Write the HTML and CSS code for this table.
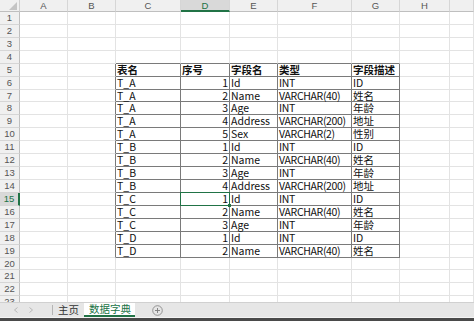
FILE: index.html
```html
<!DOCTYPE html>
<html lang="zh">
<head>
<meta charset="utf-8">
<link rel="stylesheet" href="styles.css">
</head>
<body>
<div class="app">
  <div class="sheet">
    <div class="corner"><span class="tri"></span></div>
    <div class="h">A</div><div class="h">B</div><div class="h">C</div><div class="h sel">D</div><div class="h">E</div><div class="h">F</div><div class="h">G</div><div class="h">H</div><div class="h"></div>

    <div class="r">1</div><div class="c"></div><div class="c"></div><div class="c"></div><div class="c"></div><div class="c"></div><div class="c"></div><div class="c"></div><div class="c"></div><div class="c"></div>
    <div class="r">2</div><div class="c"></div><div class="c"></div><div class="c"></div><div class="c"></div><div class="c"></div><div class="c"></div><div class="c"></div><div class="c"></div><div class="c"></div>
    <div class="r">3</div><div class="c"></div><div class="c"></div><div class="c"></div><div class="c"></div><div class="c"></div><div class="c"></div><div class="c"></div><div class="c"></div><div class="c"></div>
    <div class="r">4</div><div class="c"></div><div class="c"></div><div class="c tt"></div><div class="c tt"></div><div class="c tt"></div><div class="c tt"></div><div class="c tt"></div><div class="c"></div><div class="c"></div>

    <div class="r">5</div><div class="c"></div><div class="c tl"></div><div class="c t b">表名</div><div class="c t b">序号</div><div class="c t b">字段名</div><div class="c t b">类型</div><div class="c t b">字段描述</div><div class="c"></div><div class="c"></div>
    <div class="r">6</div><div class="c"></div><div class="c tl"></div><div class="c t">T_A</div><div class="c t n">1</div><div class="c t">Id</div><div class="c t f">INT</div><div class="c t">ID</div><div class="c"></div><div class="c"></div>
    <div class="r">7</div><div class="c"></div><div class="c tl"></div><div class="c t">T_A</div><div class="c t n">2</div><div class="c t">Name</div><div class="c t f">VARCHAR(40)</div><div class="c t">姓名</div><div class="c"></div><div class="c"></div>
    <div class="r">8</div><div class="c"></div><div class="c tl"></div><div class="c t">T_A</div><div class="c t n">3</div><div class="c t">Age</div><div class="c t f">INT</div><div class="c t">年龄</div><div class="c"></div><div class="c"></div>
    <div class="r">9</div><div class="c"></div><div class="c tl"></div><div class="c t">T_A</div><div class="c t n">4</div><div class="c t">Address</div><div class="c t f">VARCHAR(200)</div><div class="c t">地址</div><div class="c"></div><div class="c"></div>
    <div class="r">10</div><div class="c"></div><div class="c tl"></div><div class="c t">T_A</div><div class="c t n">5</div><div class="c t">Sex</div><div class="c t f">VARCHAR(2)</div><div class="c t">性别</div><div class="c"></div><div class="c"></div>
    <div class="r">11</div><div class="c"></div><div class="c tl"></div><div class="c t">T_B</div><div class="c t n">1</div><div class="c t">Id</div><div class="c t f">INT</div><div class="c t">ID</div><div class="c"></div><div class="c"></div>
    <div class="r">12</div><div class="c"></div><div class="c tl"></div><div class="c t">T_B</div><div class="c t n">2</div><div class="c t">Name</div><div class="c t f">VARCHAR(40)</div><div class="c t">姓名</div><div class="c"></div><div class="c"></div>
    <div class="r">13</div><div class="c"></div><div class="c tl"></div><div class="c t">T_B</div><div class="c t n">3</div><div class="c t">Age</div><div class="c t f">INT</div><div class="c t">年龄</div><div class="c"></div><div class="c"></div>
    <div class="r">14</div><div class="c"></div><div class="c tl"></div><div class="c t">T_B</div><div class="c t n">4</div><div class="c t">Address</div><div class="c t f">VARCHAR(200)</div><div class="c t">地址</div><div class="c"></div><div class="c"></div>
    <div class="r sel">15</div><div class="c"></div><div class="c tl"></div><div class="c t">T_C</div><div class="c t n active">1</div><div class="c t">Id</div><div class="c t f">INT</div><div class="c t">ID</div><div class="c"></div><div class="c"></div>
    <div class="r">16</div><div class="c"></div><div class="c tl"></div><div class="c t">T_C</div><div class="c t n">2</div><div class="c t">Name</div><div class="c t f">VARCHAR(40)</div><div class="c t">姓名</div><div class="c"></div><div class="c"></div>
    <div class="r">17</div><div class="c"></div><div class="c tl"></div><div class="c t">T_C</div><div class="c t n">3</div><div class="c t">Age</div><div class="c t f">INT</div><div class="c t">年龄</div><div class="c"></div><div class="c"></div>
    <div class="r">18</div><div class="c"></div><div class="c tl"></div><div class="c t">T_D</div><div class="c t n">1</div><div class="c t">Id</div><div class="c t f">INT</div><div class="c t">ID</div><div class="c"></div><div class="c"></div>
    <div class="r">19</div><div class="c"></div><div class="c tl"></div><div class="c t">T_D</div><div class="c t n">2</div><div class="c t">Name</div><div class="c t f">VARCHAR(40)</div><div class="c t">姓名</div><div class="c"></div><div class="c"></div>

    <div class="r">20</div><div class="c"></div><div class="c"></div><div class="c"></div><div class="c"></div><div class="c"></div><div class="c"></div><div class="c"></div><div class="c"></div><div class="c"></div>
    <div class="r">21</div><div class="c"></div><div class="c"></div><div class="c"></div><div class="c"></div><div class="c"></div><div class="c"></div><div class="c"></div><div class="c"></div><div class="c"></div>
    <div class="r">22</div><div class="c"></div><div class="c"></div><div class="c"></div><div class="c"></div><div class="c"></div><div class="c"></div><div class="c"></div><div class="c"></div><div class="c"></div>
    <div class="r">23</div><div class="c"></div><div class="c"></div><div class="c"></div><div class="c"></div><div class="c"></div><div class="c"></div><div class="c"></div><div class="c"></div><div class="c"></div>
  </div>

  <div class="tabbar">
    <div class="nav">
      <svg width="8" height="8" viewBox="0 0 8 8"><path d="M5.5 1.5 L2.5 4 L5.5 6.5" fill="none" stroke="#b8b8b8" stroke-width="1"/></svg>
      <svg width="8" height="8" viewBox="0 0 8 8"><path d="M2.5 1.5 L5.5 4 L2.5 6.5" fill="none" stroke="#b8b8b8" stroke-width="1"/></svg>
    </div>
    <div class="sep"></div>
    <div class="tab">主页</div>
    <div class="tab on">数据字典</div>
    <div class="add">
      <svg width="11" height="11" viewBox="0 0 11 11"><circle cx="5.5" cy="5.5" r="4.8" fill="none" stroke="#8a8a8a" stroke-width="0.9"/><path d="M5.5 3 V8 M3 5.5 H8" stroke="#7a7a7a" stroke-width="0.9"/></svg>
    </div>
  </div>
  <div class="gap"></div>
  <div class="status"></div>
</div>
</body>
</html>
```

FILE: styles.css
```css
* { box-sizing: border-box; }
html, body { margin: 0; padding: 0; background: #fff; }
.app {
  width: 474px;
  height: 321px;
  display: flex;
  flex-direction: column;
  overflow: hidden;
  font-family: "Noto Sans CJK SC", "Noto Sans", sans-serif;
}
.sheet {
  height: 302px;
  flex: none;
  display: grid;
  grid-template-columns: 20px 48px 48px 65px 49px 48px 74px 48px 50px 1fr;
  grid-template-rows: 12px repeat(23, 12.93px);
  overflow: hidden;
}
.corner {
  background: #f0f0f0;
  border-right: 1px solid #cfcfcf;
  border-bottom: 1px solid #bfbfbf;
  position: relative;
}
.tri {
  position: absolute;
  right: 2px;
  bottom: 1px;
  width: 0;
  height: 0;
  border-left: 8px solid transparent;
  border-bottom: 8px solid #c4c4c4;
}
.h {
  background: #f0f0f0;
  border-right: 1px solid #d6d6d6;
  border-bottom: 1px solid #bfbfbf;
  color: #555;
  font-family: "Liberation Sans", "Noto Sans", sans-serif;
  font-size: 9.5px;
  line-height: 11px;
  text-align: center;
}
.h.sel {
  background: #d9d9d9;
  border-bottom: 2px solid #217346;
  color: #217346;
}
.r {
  background: #f0f0f0;
  border-right: 1px solid #bfbfbf;
  border-bottom: 1px solid #d6d6d6;
  color: #555;
  font-family: "Liberation Sans", "Noto Sans", sans-serif;
  font-size: 9.5px;
  line-height: 11.9px;
  text-align: center;
}
.r.sel {
  background: #d9d9d9;
  border-right: 2px solid #217346;
  color: #217346;
}
.c {
  border-right: 1px solid #e3e3e3;
  border-bottom: 1px solid #e3e3e3;
  font-size: 10.5px;
  line-height: 11.9px;
  color: #111;
  padding: 0 1px 0 1px;
  white-space: nowrap;
}
.c.t {
  border-right-color: #7a7a7a;
  border-bottom-color: #7a7a7a;
}
.c.tl { border-right-color: #7a7a7a; }
.c.tt { border-bottom-color: #7a7a7a; }
.c.b { font-weight: bold; }
.c.n { text-align: right; }
.c.f { letter-spacing: -0.35px; }
.c.active {
  position: relative;
}
.c.active::after {
  content: "";
  position: absolute;
  left: -1px;
  top: -1px;
  right: -1px;
  bottom: -1px;
  border: 1px solid #217346;
}
.c.active::before {
  content: "";
  position: absolute;
  right: -2px;
  bottom: -2px;
  width: 3px;
  height: 3px;
  background: #217346;
  z-index: 1;
}
.tabbar {
  height: 15px;
  flex: none;
  background: #e6e6e6;
  display: flex;
  align-items: stretch;
  border-top: 1px solid #d0d0d0;
}
.nav {
  width: 52px;
  display: flex;
  align-items: center;
  gap: 7px;
  padding-left: 12px;
}
.sep {
  width: 1px;
  background: #b5b5b5;
  margin: 2px 0 2px;
}
.tab {
  font-size: 10.5px;
  line-height: 14px;
  padding: 0 5px;
  color: #333;
}
.tab.on {
  background: #fff;
  color: #217346;
  padding: 0 4px 0 5px;
  border-bottom: 2px solid #217346;
  line-height: 12px;
}
.add {
  display: flex;
  align-items: center;
  padding-left: 17px;
}
.add svg { display: block; }
.gap { height: 1px; background: #f4f4f4; flex: none; }
.status { flex: 1; background: #4a4a4a; }
```
